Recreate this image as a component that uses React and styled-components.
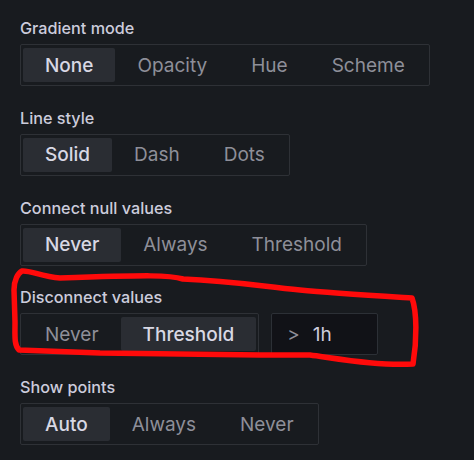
import React from 'react';
import styled, { createGlobalStyle } from 'styled-components';

const GlobalStyle = createGlobalStyle`
  html, body {
    margin: 0;
    padding: 0;
    background: #181b1f;
  }
  body {
    font-family: Inter, "Noto Sans", sans-serif;
    -webkit-font-smoothing: antialiased;
  }
`;

const Panel = styled.div`
  position: relative;
  width: 474px;
  height: 460px;
  box-sizing: border-box;
  padding: 19px 0 0 20px;
  background: #181b1f;
  overflow: hidden;
`;

const Field = styled.div`
  display: flex;
  flex-direction: column;
  align-items: flex-start;
  margin-bottom: 22.75px;
`;

const Label = styled.div`
  font-size: 16.2px;
  line-height: 18px;
  font-weight: 500;
  color: #ccccdc;
  margin-bottom: 7px;
`;

const Row = styled.div`
  display: flex;
  gap: 12px;
`;

const Group = styled.div`
  display: flex;
  height: 42px;
  box-sizing: border-box;
  padding: 3px 2px;
  border: 1px solid #2e3136;
  border-radius: 2px;
  background: #181b1f;
`;

const Option = styled.div`
  display: flex;
  align-items: center;
  height: 34px;
  padding: 0 22px;
  border-radius: 2px;
  font-size: 19px;
  font-weight: ${p => (p.$active ? 500 : 400)};
  color: ${p => (p.$active ? '#d8d8e4' : '#8e8f99')};
  background: ${p => (p.$active ? '#2a2d33' : 'transparent')};
  white-space: nowrap;
`;

const Input = styled.div`
  display: flex;
  align-items: center;
  width: 107px;
  height: 42px;
  box-sizing: border-box;
  padding: 0 15px;
  border: 1px solid #2c3036;
  border-radius: 2px;
  background: #111217;
  font-size: 19px;
  color: #ccccdc;
`;

const Prefix = styled.span`
  color: #8e8f99;
  margin-right: 13px;
`;

const Scribble = styled.svg`
  position: absolute;
  left: 0;
  top: 0;
  pointer-events: none;
`;

const fields = [
  { label: 'Gradient mode', options: ['None', 'Opacity', 'Hue', 'Scheme'], active: 0 },
  { label: 'Line style', options: ['Solid', 'Dash', 'Dots'], active: 0 },
  { label: 'Connect null values', options: ['Never', 'Always', 'Threshold'], active: 0 },
  { label: 'Disconnect values', options: ['Never', 'Threshold'], active: 1, input: '1h' },
  { label: 'Show points', options: ['Auto', 'Always', 'Never'], active: 0 },
];

export default function App() {
  return (
    <>
      <GlobalStyle />
      <Panel>
        {fields.map(f => (
          <Field key={f.label}>
            <Label>{f.label}</Label>
            <Row>
              <Group>
                {f.options.map((o, i) => (
                  <Option key={o} $active={i === f.active}>{o}</Option>
                ))}
              </Group>
              {f.input && (
                <Input>
                  <Prefix>&gt;</Prefix>
                  {f.input}
                </Input>
              )}
            </Row>
          </Field>
        ))}
        <Scribble width="474" height="460" viewBox="0 0 474 460">
          <path
            d="M22 271 C18 273 14 280 14 290 L15 322 C15 336 14 345 19 350 L100 353 L260 355 L310 355 C340 359 380 366 413 364 C417 340 417 312 412 298 C380 296 330 293 300 290 C265 287 235 281 183 279 C170 275 150 275 60 278 C42 277 30 270 22 271 Z"
            fill="none"
            stroke="#ff0a0a"
            strokeWidth="5.5"
            strokeLinejoin="round"
            strokeLinecap="round"
          />
        </Scribble>
      </Panel>
    </>
  );
}
